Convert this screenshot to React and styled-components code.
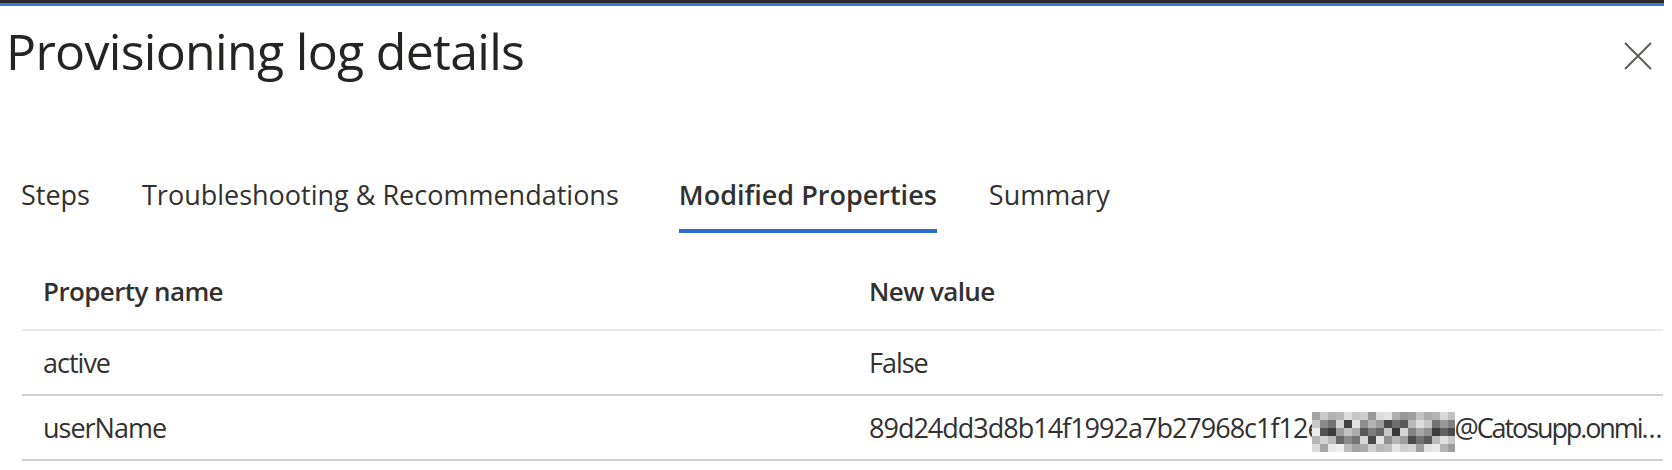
import styled, { createGlobalStyle } from 'styled-components'

const GlobalStyle = createGlobalStyle`
  body {
    margin: 0;
    background: #fff;
    font-family: 'Open Sans', 'Noto Sans', sans-serif;
    color: #323130;
  }
`

const tabs = ['Steps', 'Troubleshooting & Recommendations', 'Modified Properties', 'Summary']

const rows = [
  { name: 'active', value: 'False' },
  { name: 'userName', value: '89d24dd3d8b14f1992a7b27968c1f12e', masked: true, tail: '@Catosupp.onmi…' }
]

// pseudo random grays for the redacted part of the user name
const mosaic = []
let seed = 7
for (let r = 0; r < 5; r++) {
  for (let c = 0; c < 18; c++) {
    seed = (seed * 9301 + 49297) % 233280
    const edge = r === 0 || r === 4 || c === 0
    const v = edge ? 150 + (seed % 90) : 50 + (seed % 180)
    mosaic.push({ x: c * 8, y: r * 8 + 1, v })
  }
}

function Mosaic () {
  return (
    <Redaction>
      <svg width='143' height='42' viewBox='0 0 143 42'>
        {mosaic.map((m, i) => (
          <rect key={i} x={m.x} y={m.y} width='8' height='8' fill={`rgb(${m.v},${m.v},${m.v})`} />
        ))}
      </svg>
    </Redaction>
  )
}

function App () {
  return (
    <Page>
      <GlobalStyle />
      <TopEdge />
      <Header>
        <Title>Provisioning log details</Title>
        <CloseButton aria-label='Close'>
          <svg width='30' height='30' viewBox='0 0 30 30'>
            <path d='M2 2 L28 28 M28 2 L2 28' stroke='#605e5c' strokeWidth='2' fill='none' />
          </svg>
        </CloseButton>
      </Header>

      <TabBar>
        {tabs.map(t => (
          <Tab key={t} $active={t === 'Modified Properties'}>{t}</Tab>
        ))}
      </TabBar>

      <Table>
        <thead>
          <tr>
            <HeadCell $first>Property name</HeadCell>
            <HeadCell>New value</HeadCell>
          </tr>
        </thead>
        <tbody>
          {rows.map(r => (
            <tr key={r.name}>
              <Cell>{r.name}</Cell>
              <Cell>
                {r.value}
                {r.masked && <Mosaic />}
                {r.tail && <Tail>{r.tail}</Tail>}
              </Cell>
            </tr>
          ))}
        </tbody>
      </Table>
    </Page>
  )
}

const Page = styled.div`
  width: 1672px;
  height: 470px;
  overflow: hidden;
`

const TopEdge = styled.div`
  width: 1664px;
  height: 3px;
  background: #2a2a2a;
  border-bottom: 3px solid #3d78d2;
`

const Header = styled.header`
  display: flex;
  justify-content: space-between;
  align-items: flex-start;
  padding: 15px 19px 0 6px;
`

const Title = styled.h1`
  margin: 0;
  font-size: 50px;
  line-height: 60px;
  font-weight: 400;
  letter-spacing: -0.7px;
  color: #252423;
`

const CloseButton = styled.button`
  margin-top: 20px;
  padding: 0;
  border: 0;
  background: none;
  display: flex;
`

const TabBar = styled.nav`
  display: flex;
  gap: 52px;
  margin-top: 96px;
  padding-left: 21px;
`

const Tab = styled.div`
  font-size: 27px;
  line-height: 36px;
  padding-bottom: 16px;
  margin-left: ${p => (p.$active ? '8px' : '0')};
  font-weight: ${p => (p.$active ? 600 : 400)};
  border-bottom: 4px solid ${p => (p.$active ? '#2f6ccc' : 'transparent')};
  color: #323130;
`

const Table = styled.table`
  margin-left: 22px;
  width: 1641px;
  border-collapse: collapse;
  table-layout: fixed;
`

const HeadCell = styled.th`
  box-sizing: border-box;
  width: ${p => (p.$first ? '826px' : 'auto')};
  text-align: left;
  font-size: 26px;
  line-height: 36px;
  font-weight: 600;
  letter-spacing: -0.6px;
  padding: 40px 5px 20px 21px;
  border-bottom: 2px solid #ebebeb;
`

const Cell = styled.td`
  font-size: 27px;
  line-height: 36px;
  letter-spacing: -1px;
  padding: 14px 5px 13px 21px;
  border-bottom: 2px solid #cfcfcf;
  white-space: nowrap;
  overflow: hidden;
`

const Tail = styled.span`
  letter-spacing: -2.1px;
`

const Redaction = styled.span`
  display: inline-block;
  width: 143px;
  height: 42px;
  margin: -8px 0 -8px -10px;
  vertical-align: -7px;
  svg { display: block; }
`

export default App
